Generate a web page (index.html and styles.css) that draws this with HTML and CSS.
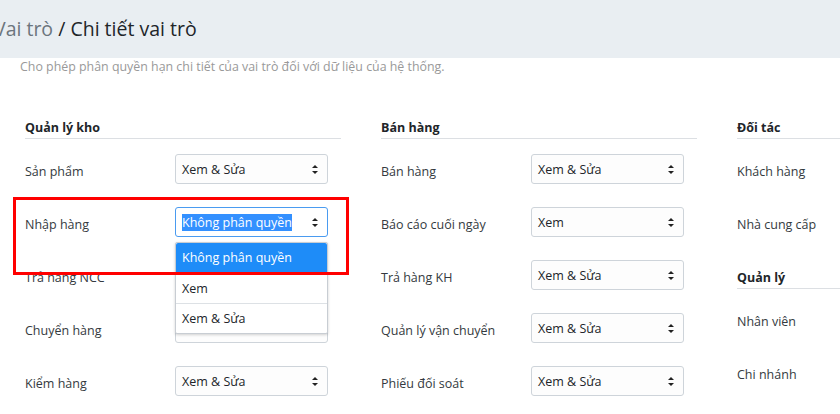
FILE: index.html
```html
<!DOCTYPE html>
<html lang="vi">
<head>
<meta charset="utf-8">
<title>Chi tiết vai trò</title>
<link rel="stylesheet" href="styles.css">
</head>
<body>
<header class="topbar">
  <h1 class="title"><span class="crumb">Vai trò</span> / Chi tiết vai trò</h1>
</header>
<p class="subtitle">Cho phép phân quyền hạn chi tiết của vai trò đối với dữ liệu của hệ thống.</p>

<main class="grid">
  <section class="col">
    <div class="group">
      <h2 class="group-title">Quản lý kho</h2>
      <div class="row"><span class="label">Sản phẩm</span><div class="select"><span>Xem &amp; Sửa</span><i class="arrows"></i></div></div>
      <div class="row row-focus"><span class="label">Nhập hàng</span>
        <div class="select focused"><span class="sel-text">Không phân quyền</span><i class="arrows"></i></div>
        <ul class="dropdown">
          <li class="opt active">Không phân quyền</li>
          <li class="opt">Xem</li>
          <li class="opt">Xem &amp; Sửa</li>
        </ul>
        <div class="highlight"></div>
      </div>
      <div class="row"><span class="label">Trả hàng NCC</span><div class="select"><span>Xem &amp; Sửa</span><i class="arrows"></i></div></div>
      <div class="row"><span class="label">Chuyển hàng</span><div class="select"><span>Xem &amp; Sửa</span><i class="arrows"></i></div></div>
      <div class="row"><span class="label">Kiểm hàng</span><div class="select"><span>Xem &amp; Sửa</span><i class="arrows"></i></div></div>
    </div>
  </section>

  <section class="col">
    <div class="group">
      <h2 class="group-title">Bán hàng</h2>
      <div class="row"><span class="label">Bán hàng</span><div class="select"><span>Xem &amp; Sửa</span><i class="arrows"></i></div></div>
      <div class="row"><span class="label">Báo cáo cuối ngày</span><div class="select"><span>Xem</span><i class="arrows"></i></div></div>
      <div class="row"><span class="label">Trả hàng KH</span><div class="select"><span>Xem &amp; Sửa</span><i class="arrows"></i></div></div>
      <div class="row"><span class="label">Quản lý vận chuyển</span><div class="select"><span>Xem &amp; Sửa</span><i class="arrows"></i></div></div>
      <div class="row"><span class="label">Phiếu đối soát</span><div class="select"><span>Xem &amp; Sửa</span><i class="arrows"></i></div></div>
    </div>
  </section>

  <section class="col">
    <div class="group">
      <h2 class="group-title">Đối tác</h2>
      <div class="row"><span class="label">Khách hàng</span><div class="select"><span>Xem &amp; Sửa</span><i class="arrows"></i></div></div>
      <div class="row"><span class="label">Nhà cung cấp</span><div class="select"><span>Xem &amp; Sửa</span><i class="arrows"></i></div></div>
    </div>
    <div class="group">
      <h2 class="group-title">Quản lý</h2>
      <div class="row"><span class="label">Nhân viên</span><div class="select"><span>Xem &amp; Sửa</span><i class="arrows"></i></div></div>
      <div class="row"><span class="label">Chi nhánh</span><div class="select"><span>Xem &amp; Sửa</span><i class="arrows"></i></div></div>
    </div>
  </section>
</main>
</body>
</html>
```

FILE: styles.css
```css
* { box-sizing: border-box; }

html, body {
  margin: 0;
  padding: 0;
  width: 840px;
  height: 414px;
  overflow: hidden;
  background: #ffffff;
  font-family: "Open Sans", "Noto Sans", sans-serif;
  color: #212529;
}

.topbar {
  height: 58px;
  background: #e9eef2;
  display: flex;
  align-items: center;
  padding-left: 0;
}

.title {
  margin: 0 0 0 -6px;
  font-size: 19.5px;
  font-weight: 400;
  color: #212529;
  line-height: 1;
  white-space: nowrap;
}

.crumb { color: #6c757d; }

.subtitle {
  margin: 0;
  padding: 0 0 0 20px;
  height: 18px;
  line-height: 18px;
  font-size: 12.4px;
  color: #999999;
  white-space: nowrap;
}

.grid {
  display: grid;
  grid-template-columns: 316px 316px 316px;
  column-gap: 40px;
  padding: 42px 0 0 25px;
}

.col {
  display: flex;
  flex-direction: column;
  gap: 31px;
}

.group {
  display: flex;
  flex-direction: column;
  gap: 23px;
}

.group-title {
  margin: 0 0 -8px 0;
  height: 20px;
  line-height: 20px;
  font-size: 12.5px;
  font-weight: 700;
  color: #212529;
  border-bottom: 1px solid #dcdfe3;
  box-sizing: content-box;
  padding-bottom: 0;
}

.row {
  position: relative;
  display: flex;
  align-items: center;
  height: 30px;
}

.label {
  width: 150px;
  font-size: 12.5px;
  color: #343a40;
  padding-top: 5px;
  white-space: nowrap;
}

.select {
  position: relative;
  width: 153px;
  height: 30px;
  border: 1px solid #ced4da;
  border-radius: 3px;
  background: #fdfdfd;
  display: flex;
  align-items: center;
  padding-left: 6px;
  font-size: 12.5px;
  color: #212529;
  white-space: nowrap;
}

.arrows {
  position: absolute;
  right: 9px;
  top: 50%;
  width: 6px;
  height: 9px;
  margin-top: -4px;
}
.arrows::before,
.arrows::after {
  content: "";
  position: absolute;
  left: 0;
  border-left: 3px solid transparent;
  border-right: 3px solid transparent;
}
.arrows::before { top: 0; border-bottom: 3.5px solid #222; }
.arrows::after { bottom: 0; border-top: 3.5px solid #222; }

.select.focused {
  border: 1.5px solid #4a9bf0;
  border-radius: 3px;
  background: #ffffff;
}

.sel-text {
  background: #3390ff;
  color: #ffffff;
  line-height: 17px;
}

.dropdown {
  position: absolute;
  left: 150px;
  top: 35px;
  width: 153px;
  margin: 0;
  padding: 0;
  list-style: none;
  background: #ffffff;
  border: 1px solid #c8cdd3;
  border-radius: 2px;
  box-shadow: 0 1px 3px rgba(0,0,0,0.18);
  z-index: 5;
}

.opt {
  height: 30px;
  line-height: 30px;
  padding-left: 6px;
  font-size: 12.5px;
  color: #212529;
  border-top: 1px solid #dde1e5;
}
.opt:first-child { border-top: 0; }
.opt.active {
  background: #1e8cf8;
  color: #ffffff;
  border-radius: 2px 2px 0 0;
}

.highlight {
  position: absolute;
  left: -12px;
  top: -10px;
  width: 336px;
  height: 78px;
  border: 3px solid #ff0000;
  z-index: 6;
  pointer-events: none;
}
```
